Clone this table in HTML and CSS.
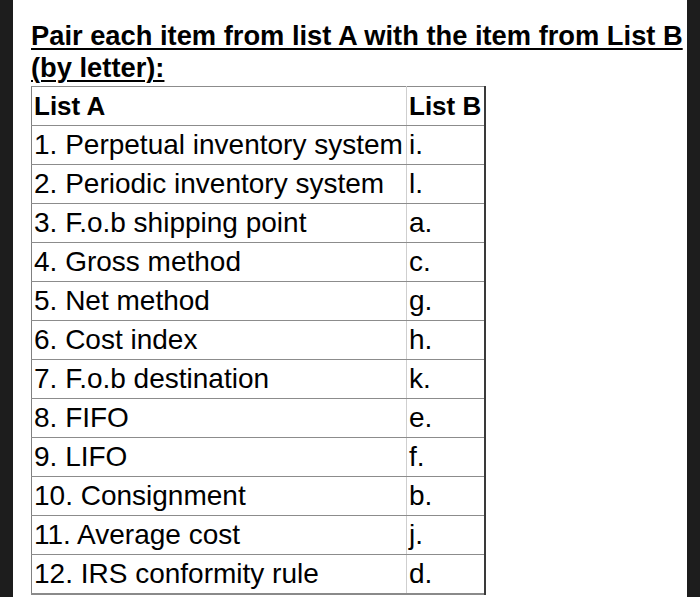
FILE: index.html
```html
<!DOCTYPE html>
<html>
<head>
<meta charset="utf-8">
<link rel="stylesheet" href="styles.css">
</head>
<body>
<div class="page">
  <p class="title">Pair each item from list A with the item from List B<br>(by letter):</p>
  <table class="match">
    <colgroup><col class="col-a"><col class="col-b"></colgroup>
    <tr class="head"><th>List A</th><th>List B</th></tr>
    <tr><td>1. Perpetual inventory system</td><td>i.</td></tr>
    <tr><td>2. Periodic inventory system</td><td>l.</td></tr>
    <tr><td>3. F.o.b shipping point</td><td>a.</td></tr>
    <tr><td>4. Gross method</td><td>c.</td></tr>
    <tr><td>5. Net method</td><td>g.</td></tr>
    <tr><td>6. Cost index</td><td>h.</td></tr>
    <tr><td>7. F.o.b destination</td><td>k.</td></tr>
    <tr><td>8. FIFO</td><td>e.</td></tr>
    <tr><td>9. LIFO</td><td>f.</td></tr>
    <tr><td>10. Consignment</td><td>b.</td></tr>
    <tr><td>11. Average cost</td><td>j.</td></tr>
    <tr><td>12. IRS conformity rule</td><td>d.</td></tr>
  </table>
</div>
</body>
</html>
```
FILE: styles.css
```css
html, body {
  margin: 0;
  padding: 0;
  background: #1d1d1d;
  height: 597px;
  overflow: hidden;
}
.page {
  margin: 0 13px;
  height: 597px;
  background: #ffffff;
  padding: 20px 0 0 18px;
  box-sizing: border-box;
  font-family: "Liberation Sans", Arial, sans-serif;
  color: #000;
}
.title {
  margin: 0 0 2px 0;
  font-size: 27.3px;
  line-height: 32px;
  font-weight: bold;
  text-decoration: underline;
  text-decoration-thickness: 2px;
  text-underline-offset: 3px;
  white-space: nowrap;
}
.match {
  border-collapse: collapse;
  table-layout: fixed;
  width: 453px;
  border-top: 1px solid #808080;
  border-left: 1px solid #808080;
  border-bottom: 2px solid #8a8a8a;
  border-right: 2px solid #3a3a3a;
  font-size: 28px;
}
.col-a { width: 375px; }
.col-b { width: 78px; }
.match th, .match td {
  height: 39px;
  padding: 0 2px;
  line-height: 32px;
  text-align: left;
  white-space: nowrap;
  border-top: 1px solid #8c8c8c;
  border-bottom: 1px solid #8c8c8c;
  border-right: 1px solid #cfcfcf;
  box-sizing: border-box;
  vertical-align: middle;
}
.match th {
  font-weight: bold;
  font-size: 26px;
}
.match td:last-child, .match th:last-child {
  border-right: 2px solid #3a3a3a;
}
```
